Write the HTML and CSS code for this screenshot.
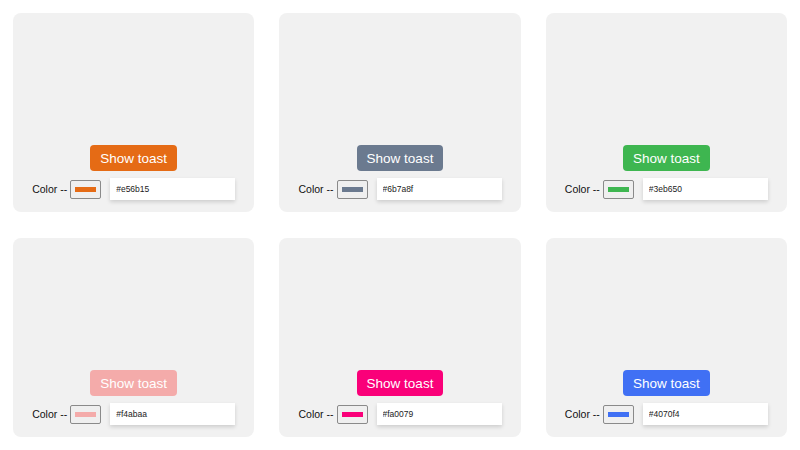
FILE: index.html
```html
<!DOCTYPE html>
<html lang="en">
<head>
    <meta charset="UTF-8">
    <meta name="viewport" content="width=device-width, initial-scale=1.0">
    <title>Toast colors</title>
    <link rel="stylesheet" href="styles.css">
</head>
<body>
    <div class="grid">
        <div class="card">
            <button class="toast-btn" style="background-color: #e56b15">Show toast</button>
            <div class="color-row">
                <label>Color --</label>
                <input type="color" class="color-pick" value="#e56b15">
                <input type="text" class="color-text" value="#e56b15">
            </div>
        </div>
        <div class="card">
            <button class="toast-btn" style="background-color: #6b7a8f">Show toast</button>
            <div class="color-row">
                <label>Color --</label>
                <input type="color" class="color-pick" value="#6b7a8f">
                <input type="text" class="color-text" value="#6b7a8f">
            </div>
        </div>
        <div class="card">
            <button class="toast-btn" style="background-color: #3eb650">Show toast</button>
            <div class="color-row">
                <label>Color --</label>
                <input type="color" class="color-pick" value="#3eb650">
                <input type="text" class="color-text" value="#3eb650">
            </div>
        </div>
        <div class="card">
            <button class="toast-btn" style="background-color: #f4abaa">Show toast</button>
            <div class="color-row">
                <label>Color --</label>
                <input type="color" class="color-pick" value="#f4abaa">
                <input type="text" class="color-text" value="#f4abaa">
            </div>
        </div>
        <div class="card">
            <button class="toast-btn" style="background-color: #fa0079">Show toast</button>
            <div class="color-row">
                <label>Color --</label>
                <input type="color" class="color-pick" value="#fa0079">
                <input type="text" class="color-text" value="#fa0079">
            </div>
        </div>
        <div class="card">
            <button class="toast-btn" style="background-color: #4070f4">Show toast</button>
            <div class="color-row">
                <label>Color --</label>
                <input type="color" class="color-pick" value="#4070f4">
                <input type="text" class="color-text" value="#4070f4">
            </div>
        </div>
    </div>
</body>
</html>
```

FILE: styles.css
```css
/* styles.css */
body {
    font-family: "Liberation Sans", Arial, sans-serif;
    margin: 0;
    background: #fff;
}

.grid {
    display: grid;
    grid-template-columns: repeat(3, 1fr);
    grid-template-rows: 199px 199px;
    gap: 26px 25px;
    padding: 13px;
}

.card {
    background: #f1f1f1;
    border-radius: 8px;
    display: flex;
    flex-direction: column;
    align-items: center;
    justify-content: flex-end;
    padding-bottom: 12px;
    box-sizing: border-box;
}

.toast-btn {
    font-family: "Liberation Sans", Arial, sans-serif;
    font-size: 13.5px;
    color: #fff;
    border: none;
    border-radius: 4px;
    height: 26px;
    padding: 0 10px;
    margin-bottom: 7px;
}

.color-row {
    display: flex;
    align-items: center;
    height: 22px;
}

.color-row label {
    font-size: 10.5px;
    color: #111;
    margin-right: 3px;
}

.color-pick {
    width: 31px;
    height: 19px;
    padding: 0;
    border: 1px solid #8a8a8a;
    border-radius: 2px;
    background: #efefef;
    box-sizing: border-box;
    margin: 0 9px 0 0;
}

.color-pick::-webkit-color-swatch-wrapper {
    padding: 6px 4px;
}

.color-pick::-webkit-color-swatch {
    border: none;
}

.color-text {
    width: 125px;
    height: 22px;
    box-sizing: border-box;
    border: none;
    background: #fff;
    box-shadow: 0 2px 4px rgba(0, 0, 0, 0.15);
    font-family: "Liberation Sans", Arial, sans-serif;
    font-size: 8.5px;
    color: #222;
    padding: 0 6px;
    margin: 0;
}
```
